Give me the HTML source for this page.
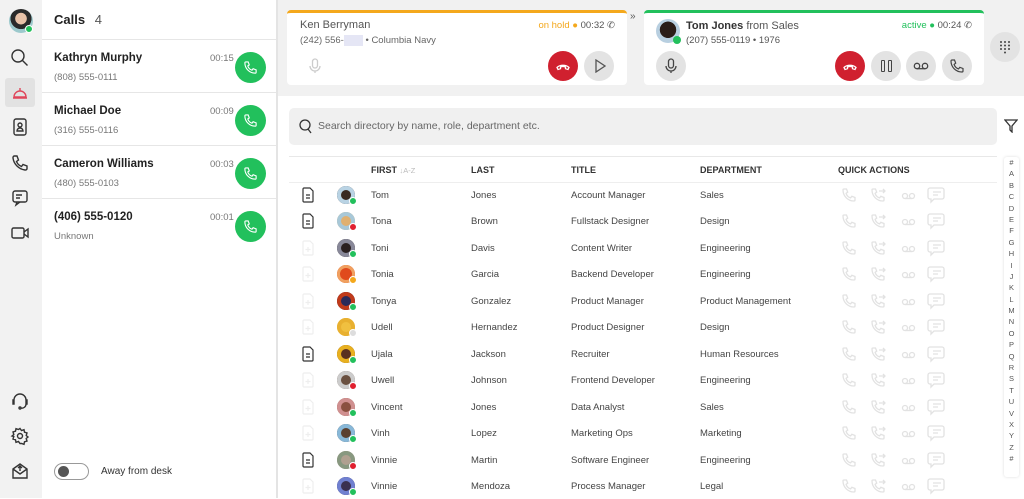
<!DOCTYPE html>
<html><head><meta charset="utf-8"><style>
*{box-sizing:border-box;margin:0;padding:0}
body{width:1024px;height:498px;overflow:hidden;font-family:"Liberation Sans",sans-serif;background:#fff;position:relative;color:#333}
.a{position:absolute}
.side{left:0;top:0;width:42px;height:498px;background:#f2f2f2}
.calls{left:42px;top:0;width:235px;height:498px;background:#fff;border-right:1px solid #e4e4e4}
.ci{position:absolute;left:0;width:234px;height:53px;border-top:1px solid #e6e6e6}
.ci b{position:absolute;left:12px;top:12px;font-size:11.5px;color:#222}
.ci span{position:absolute;left:12px;top:32px;font-size:9.5px;color:#777}
.ci i{position:absolute;left:168px;top:13px;font-style:normal;font-size:9.5px;color:#777}
.gb{position:absolute;left:193px;top:12px;width:31px;height:31px;border-radius:50%;background:#22c05c}
.gb svg{position:absolute;left:8px;top:8px}
.top{left:277px;top:0;width:747px;height:96px;background:#f1f1f1}
.card{position:absolute;background:#fff;border-radius:4px;height:75px;top:10px}
.btn{position:absolute;width:30px;height:30px;border-radius:50%;background:#e3e3e3;top:41px}
.btn svg{position:absolute;left:7px;top:7px}
.red{background:#d0202f}
.sr{left:289px;top:108px;width:708px;height:37px;background:#f0f0f0;border-radius:5px}
.th{font-size:9px;font-weight:bold;color:#333;top:165px}
.row{position:absolute;left:289px;width:708px;height:26px;font-size:9.5px;color:#444}
.row span{position:absolute;top:8px}
.av{position:absolute;left:48px;top:4px;width:18px;height:18px;border-radius:50%}
.st{position:absolute;left:60px;top:15px;width:8px;height:8px;border-radius:50%;border:1px solid #fff}
.qa{position:absolute;left:550px;top:4px}
.alpha{left:1004px;top:157px;width:15px;height:320px;background:#fff;box-shadow:0 0 3px #ddd;border-radius:3px;font-size:7.5px;color:#555;text-align:center}
.alpha div{height:11.4px;line-height:11.4px}
</style></head><body>
<svg width="0" height="0" style="position:absolute"><defs>
<symbol id="ph" viewBox="0 0 16 16"><path d="M3 2h2.5l1.2 3.2-1.6 1.2a7 7 0 0 0 4.5 4.5l1.2-1.6L14 10.5V13a1 1 0 0 1-1 1A11 11 0 0 1 2 3a1 1 0 0 1 1-1z" fill="none" stroke="currentColor" stroke-width="1.2"/></symbol>
<symbol id="qa" viewBox="0 0 110 18"><g fill="none" stroke="#e2e2e2" stroke-width="1.3"><path d="M5 3h2.5l1.2 3.2-1.6 1.2a7 7 0 0 0 4.5 4.5l1.2-1.6L16 11.5V14a1 1 0 0 1-1 1A11 11 0 0 1 4 4a1 1 0 0 1 1-1z"/><path d="M34 3h2.5l1.2 3.2-1.6 1.2a7 7 0 0 0 4.5 4.5l1.2-1.6L45 11.5V14a1 1 0 0 1-1 1A11 11 0 0 1 33 4a1 1 0 0 1 1-1zM40 5h6M44 3l2 2-2 2"/><circle cx="66" cy="10" r="2.5"/><circle cx="73" cy="10" r="2.5"/><path d="M66 12.5h7"/><path d="M91 2h12a2 2 0 0 1 2 2v7a2 2 0 0 1-2 2h-8l-3 3v-3h-1a2 2 0 0 1-2-2V4a2 2 0 0 1 2-2zM94 6h8M94 9h5"/></g></symbol>
<symbol id="dk" viewBox="0 0 12 16"><path d="M1 2a1 1 0 0 1 1-1h6l3 3v10a1 1 0 0 1-1 1H2a1 1 0 0 1-1-1z M4 8h4M4 11h4" fill="none" stroke="#333" stroke-width="1.2"/></symbol>
<symbol id="lt" viewBox="0 0 12 16"><path d="M1 2a1 1 0 0 1 1-1h6l3 3v10a1 1 0 0 1-1 1H2a1 1 0 0 1-1-1zM6 7v5M3.5 9.5h5" fill="none" stroke="#eee" stroke-width="1.2"/></symbol>
<symbol id="hu" viewBox="0 0 16 16"><path d="M2 9.5c3-3 9-3 12 0l-1 2-2.5-.8v-1.7a6 6 0 0 0-5 0v1.7L3 11.5z" fill="none" stroke="#fff" stroke-width="1.3"/></symbol>
</defs></svg>
<div class="a side">
 <div class="a" style="left:9px;top:9px;width:24px;height:24px;border-radius:50%;background:radial-gradient(circle at 50% 40%,#e8c2a8 30%,#2a2a2a 32%,#2a2a2a 55%,#9cc9cc 57%)"></div>
 <div class="a" style="left:25px;top:25px;width:8px;height:8px;border-radius:50%;background:#22c05c;border:1px solid #fff"></div>
 <svg class="a" style="left:10px;top:48px" width="20" height="20" viewBox="0 0 20 20" fill="none" stroke="#333" stroke-width="1.4"><circle cx="8" cy="8" r="6"/><path d="M12.5 12.5l5 5"/></svg>
 <div class="a" style="left:5px;top:78px;width:30px;height:29px;background:#e2e2e2;border-radius:3px"></div>
 <svg class="a" style="left:10px;top:83px" width="20" height="20" viewBox="0 0 20 20" fill="none" stroke="#e0455a" stroke-width="1.4"><path d="M3 15h14M4 14a6 6 0 0 1 12 0zM10 5v3"/></svg>
 <svg class="a" style="left:10px;top:117px" width="20" height="20" viewBox="0 0 20 20" fill="none" stroke="#333" stroke-width="1.4"><rect x="4" y="2" width="12" height="16" rx="2"/><circle cx="10" cy="8" r="2"/><path d="M7 14a3 3 0 0 1 6 0z"/></svg>
 <svg class="a" style="left:10px;top:153px" width="20" height="20" viewBox="0 0 20 20" fill="none" stroke="#333" stroke-width="1.4"><path d="M4 3l3 0 1.5 4-2 1.5a9 9 0 0 0 5 5l1.5-2 4 1.5v3a2 2 0 0 1-2 1A14 14 0 0 1 3 5a2 2 0 0 1 1-2z"/></svg>
 <svg class="a" style="left:10px;top:188px" width="20" height="20" viewBox="0 0 20 20" fill="none" stroke="#333" stroke-width="1.4"><rect x="3" y="3" width="14" height="11" rx="2"/><path d="M7 14l-1 3 4-3M6 7h6M6 10h4"/></svg>
 <svg class="a" style="left:10px;top:223px" width="20" height="20" viewBox="0 0 20 20" fill="none" stroke="#333" stroke-width="1.4"><rect x="2" y="5" width="12" height="10" rx="1.5"/><path d="M14 9l4-3v8l-4-3"/></svg>
 <svg class="a" style="left:10px;top:391px" width="20" height="20" viewBox="0 0 20 20" fill="none" stroke="#333" stroke-width="1.4"><path d="M4 11V9a6 6 0 0 1 12 0v2M4 9h-1v4h1zM16 9h1v4h-1zM16 13a4 4 0 0 1-5 4"/><circle cx="10" cy="17" r="1"/></svg>
 <svg class="a" style="left:10px;top:426px" width="20" height="20" viewBox="0 0 20 20" fill="none" stroke="#333" stroke-width="1.4"><circle cx="10" cy="10" r="2.5"/><path d="M10 2.5l1.5 2 2.5-.8.5 2.5 2.5.8-.8 2.5 1.8 1.5-1.8 1.5.8 2.5-2.5.8-.5 2.5-2.5-.8L10 17.5l-1.5-2-2.5.8-.5-2.5-2.5-.8.8-2.5L2 10l1.8-1.5L3 6l2.5-.8.5-2.5 2.5.8z"/></svg>
 <svg class="a" style="left:10px;top:461px" width="20" height="20" viewBox="0 0 20 20" fill="none" stroke="#333" stroke-width="1.4"><path d="M3 8l7-5 7 5v9H3zM3 8l7 5 7-5M10 10V5M8 7l2-2 2 2"/></svg>
</div>
<div class="a calls">
 <div class="a" style="left:12px;top:12px;font-size:13px;font-weight:bold;color:#222">Calls <span style="font-weight:normal;color:#555;margin-left:6px">4</span></div>
 <div class="ci" style="top:39px"><b>Kathryn Murphy</b><span>(808) 555-0111</span><i>00:15</i><div class="gb"><svg width="15" height="15" style="color:#fff"><use href="#ph"/></svg></div></div>
 <div class="ci" style="top:92px"><b>Michael Doe</b><span>(316) 555-0116</span><i>00:09</i><div class="gb"><svg width="15" height="15" style="color:#fff"><use href="#ph"/></svg></div></div>
 <div class="ci" style="top:145px"><b>Cameron Williams</b><span>(480) 555-0103</span><i>00:03</i><div class="gb"><svg width="15" height="15" style="color:#fff"><use href="#ph"/></svg></div></div>
 <div class="ci" style="top:198px"><b>(406) 555-0120</b><span>Unknown</span><i>00:01</i><div class="gb"><svg width="15" height="15" style="color:#fff"><use href="#ph"/></svg></div></div>
 <div class="a" style="left:12px;top:463px;width:35px;height:17px;border:1px solid #999;border-radius:9px"><div class="a" style="left:3px;top:2px;width:11px;height:11px;border-radius:50%;background:#555"></div></div>
 <div class="a" style="left:59px;top:466px;font-size:10px;color:#333">Away from desk</div>
</div>
<div class="a top">
 <div class="card" style="left:10px;width:340px;border-top:3px solid #f4a81c">
  <div class="a" style="left:13px;top:6px;font-size:11px;color:#555">Ken Berryman</div>
  <div class="a" style="left:13px;top:22px;font-size:9.5px;color:#666">(242) 556-<span style="background:#e5e6f5;color:#e5e6f5">xxxx</span> • Columbia Navy</div>
  <div class="a" style="right:12px;top:7px;font-size:9.5px;color:#555"><span style="color:#f4a81c">on hold ● </span>00:32 ✆</div>
  <div class="btn red" style="left:261px;top:38px"><svg width="16" height="16"><use href="#hu"/></svg></div><div class="btn" style="left:297px;top:38px"></div>
  <svg class="a" style="left:307px;top:46px" width="12" height="14" viewBox="0 0 12 14" fill="none" stroke="#555" stroke-width="1.3"><path d="M2 1l9 6-9 6z"/></svg>
  <svg class="a" style="left:22px;top:45px" width="12" height="16" viewBox="0 0 12 16" fill="none" stroke="#ccc" stroke-width="1.3"><rect x="3.5" y="1" width="5" height="9" rx="2.5"/><path d="M1 8a5 5 0 0 0 10 0M6 13v2"/></svg>
 </div>
 <div class="a" style="left:353px;top:11px;font-size:10px;color:#555">»</div>
 <div class="card" style="left:367px;width:340px;border-top:3px solid #22c05c">
  <div class="a" style="left:12px;top:6px;width:24px;height:24px;border-radius:50%;background:radial-gradient(circle at 50% 45%,#2a1d18 45%,#b8cfe0 47%)"></div>
  <div class="a" style="left:29px;top:23px;width:8px;height:8px;border-radius:50%;background:#22c05c"></div>
  <div class="a" style="left:42px;top:7px;font-size:11px;color:#555"><b style="color:#333">Tom Jones</b> from Sales</div>
  <div class="a" style="left:42px;top:22px;font-size:9.5px;color:#555">(207) 555-0119 • 1976</div>
  <div class="a" style="right:12px;top:7px;font-size:9.5px;color:#555"><span style="color:#22c05c">active ● </span>00:24 ✆</div>
  <div class="btn" style="left:12px;top:38px"></div>
  <svg class="a" style="left:21px;top:45px" width="12" height="16" viewBox="0 0 12 16" fill="none" stroke="#444" stroke-width="1.3"><rect x="3.5" y="1" width="5" height="9" rx="2.5"/><path d="M1 8a5 5 0 0 0 10 0M6 13v2"/></svg>
  <div class="btn red" style="left:191px;top:38px"><svg width="16" height="16"><use href="#hu"/></svg></div>
  <div class="btn" style="left:227px;top:38px"></div><div class="btn" style="left:262px;top:38px"></div><div class="btn" style="left:298px;top:38px"><svg width="16" height="16" style="color:#444"><use href="#ph"/></svg></div>
  <div class="a" style="left:237px;top:47px;width:4px;height:12px;border:1.3px solid #444;border-radius:1px"></div><div class="a" style="left:244px;top:47px;width:4px;height:12px;border:1.3px solid #444;border-radius:1px"></div>
  <svg class="a" style="left:269px;top:48px" width="16" height="10" fill="none" stroke="#444" stroke-width="1.3"><circle cx="4" cy="5" r="2.7"/><circle cx="12" cy="5" r="2.7"/><path d="M4 7.7h8"/></svg>
 </div>
 <div class="a" style="left:713px;top:32px;width:30px;height:30px;border-radius:50%;background:#e3e3e3"></div>
 <svg class="a" style="left:722px;top:40px" width="12" height="14" fill="#444"><circle cx="2" cy="2" r="1"/><circle cx="6" cy="2" r="1"/><circle cx="10" cy="2" r="1"/><circle cx="2" cy="5.5" r="1"/><circle cx="6" cy="5.5" r="1"/><circle cx="10" cy="5.5" r="1"/><circle cx="2" cy="9" r="1"/><circle cx="6" cy="9" r="1"/><circle cx="10" cy="9" r="1"/><circle cx="6" cy="12.5" r="1"/></svg>
</div>
<div class="a" style="left:277px;top:0;width:1px;height:498px;background:#e4e4e4"></div>
<div class="a sr">
 <svg class="a" style="left:9px;top:11px" width="14" height="15" viewBox="0 0 14 15" fill="none" stroke="#333" stroke-width="1.3"><circle cx="7" cy="6" r="5"/><path d="M10 10l3 4"/></svg>
 <div class="a" style="left:29px;top:12px;font-size:10.5px;color:#666">Search directory by name, role, department etc.</div>
</div>
<svg class="a" style="left:1004px;top:119px" width="14" height="14" viewBox="0 0 14 14" fill="none" stroke="#333" stroke-width="1.3"><path d="M1 1h12L8 7v6L6 11V7z"/></svg>
<div class="a" style="left:289px;top:156px;width:708px;height:1px;background:#e8e8e8"></div>
<div class="a" style="left:289px;top:182px;width:708px;height:1px;background:#eee"></div>
<div class="a th" style="left:371px">FIRST <span style="font-weight:normal;color:#bbb;font-size:7.5px">↓A-Z</span></div>
<div class="a th" style="left:471px">LAST</div><div class="a th" style="left:571px">TITLE</div><div class="a th" style="left:700px">DEPARTMENT</div><div class="a th" style="left:838px">QUICK ACTIONS</div>
<div class="a alpha"><div>#</div><div>A</div><div>B</div><div>C</div><div>D</div><div>E</div><div>F</div><div>G</div><div>H</div><div>I</div><div>J</div><div>K</div><div>L</div><div>M</div><div>N</div><div>O</div><div>P</div><div>Q</div><div>R</div><div>S</div><div>T</div><div>U</div><div>V</div><div>X</div><div>Y</div><div>Z</div><div>#</div></div>
<div class="row" style="top:182px"><svg class="a" style="left:13px;top:5px" width="12" height="16"><use href="#dk"/></svg><div class="av" style="background:#3a2a22;box-shadow:inset 0 0 0 4px #b9d3e4"></div><div class="st" style="background:#22c05c"></div><span style="left:82px">Tom</span><span style="left:182px">Jones</span><span style="left:282px">Account Manager</span><span style="left:411px">Sales</span><svg class="qa" width="110" height="18"><use href="#qa"/></svg></div>
<div class="row" style="top:208px"><svg class="a" style="left:13px;top:5px" width="12" height="16"><use href="#dk"/></svg><div class="av" style="background:#e0b070;box-shadow:inset 0 0 0 4px #a8c8d8"></div><div class="st" style="background:#e0202f"></div><span style="left:82px">Tona</span><span style="left:182px">Brown</span><span style="left:282px">Fullstack Designer</span><span style="left:411px">Design</span><svg class="qa" width="110" height="18"><use href="#qa"/></svg></div>
<div class="row" style="top:235px"><svg class="a" style="left:13px;top:5px" width="12" height="16"><use href="#lt"/></svg><div class="av" style="background:#2a2020;box-shadow:inset 0 0 0 4px #889"></div><div class="st" style="background:#22c05c"></div><span style="left:82px">Toni</span><span style="left:182px">Davis</span><span style="left:282px">Content Writer</span><span style="left:411px">Engineering</span><svg class="qa" width="110" height="18"><use href="#qa"/></svg></div>
<div class="row" style="top:261px"><svg class="a" style="left:13px;top:5px" width="12" height="16"><use href="#lt"/></svg><div class="av" style="background:#e04a1c;box-shadow:inset 0 0 0 3px #f0a060"></div><div class="st" style="background:#f4a81c"></div><span style="left:82px">Tonia</span><span style="left:182px">Garcia</span><span style="left:282px">Backend Developer</span><span style="left:411px">Engineering</span><svg class="qa" width="110" height="18"><use href="#qa"/></svg></div>
<div class="row" style="top:288px"><svg class="a" style="left:13px;top:5px" width="12" height="16"><use href="#lt"/></svg><div class="av" style="background:#2a2a5a;box-shadow:inset 0 0 0 4px #c03a1a"></div><div class="st" style="background:#22c05c"></div><span style="left:82px">Tonya</span><span style="left:182px">Gonzalez</span><span style="left:282px">Product Manager</span><span style="left:411px">Product Management</span><svg class="qa" width="110" height="18"><use href="#qa"/></svg></div>
<div class="row" style="top:314px"><svg class="a" style="left:13px;top:5px" width="12" height="16"><use href="#lt"/></svg><div class="av" style="background:#f0c040;box-shadow:inset 0 0 0 4px #e8b030"></div><div class="st" style="background:#ddd"></div><span style="left:82px">Udell</span><span style="left:182px">Hernandez</span><span style="left:282px">Product Designer</span><span style="left:411px">Design</span><svg class="qa" width="110" height="18"><use href="#qa"/></svg></div>
<div class="row" style="top:341px"><svg class="a" style="left:13px;top:5px" width="12" height="16"><use href="#dk"/></svg><div class="av" style="background:#5a3020;box-shadow:inset 0 0 0 4px #e8b020"></div><div class="st" style="background:#22c05c"></div><span style="left:82px">Ujala</span><span style="left:182px">Jackson</span><span style="left:282px">Recruiter</span><span style="left:411px">Human Resources</span><svg class="qa" width="110" height="18"><use href="#qa"/></svg></div>
<div class="row" style="top:367px"><svg class="a" style="left:13px;top:5px" width="12" height="16"><use href="#lt"/></svg><div class="av" style="background:#6a5040;box-shadow:inset 0 0 0 4px #ccc"></div><div class="st" style="background:#e0202f"></div><span style="left:82px">Uwell</span><span style="left:182px">Johnson</span><span style="left:282px">Frontend Developer</span><span style="left:411px">Engineering</span><svg class="qa" width="110" height="18"><use href="#qa"/></svg></div>
<div class="row" style="top:394px"><svg class="a" style="left:13px;top:5px" width="12" height="16"><use href="#lt"/></svg><div class="av" style="background:#8a5040;box-shadow:inset 0 0 0 4px #d09090"></div><div class="st" style="background:#22c05c"></div><span style="left:82px">Vincent</span><span style="left:182px">Jones</span><span style="left:282px">Data Analyst</span><span style="left:411px">Sales</span><svg class="qa" width="110" height="18"><use href="#qa"/></svg></div>
<div class="row" style="top:420px"><svg class="a" style="left:13px;top:5px" width="12" height="16"><use href="#lt"/></svg><div class="av" style="background:#5a4030;box-shadow:inset 0 0 0 4px #88b8d8"></div><div class="st" style="background:#22c05c"></div><span style="left:82px">Vinh</span><span style="left:182px">Lopez</span><span style="left:282px">Marketing Ops</span><span style="left:411px">Marketing</span><svg class="qa" width="110" height="18"><use href="#qa"/></svg></div>
<div class="row" style="top:447px"><svg class="a" style="left:13px;top:5px" width="12" height="16"><use href="#dk"/></svg><div class="av" style="background:#b0a090;box-shadow:inset 0 0 0 4px #889880"></div><div class="st" style="background:#e0202f"></div><span style="left:82px">Vinnie</span><span style="left:182px">Martin</span><span style="left:282px">Software Engineer</span><span style="left:411px">Engineering</span><svg class="qa" width="110" height="18"><use href="#qa"/></svg></div>
<div class="row" style="top:473px"><svg class="a" style="left:13px;top:5px" width="12" height="16"><use href="#lt"/></svg><div class="av" style="background:#3a3050;box-shadow:inset 0 0 0 4px #7080d0"></div><div class="st" style="background:#22c05c"></div><span style="left:82px">Vinnie</span><span style="left:182px">Mendoza</span><span style="left:282px">Process Manager</span><span style="left:411px">Legal</span><svg class="qa" width="110" height="18"><use href="#qa"/></svg></div>
</body></html>
